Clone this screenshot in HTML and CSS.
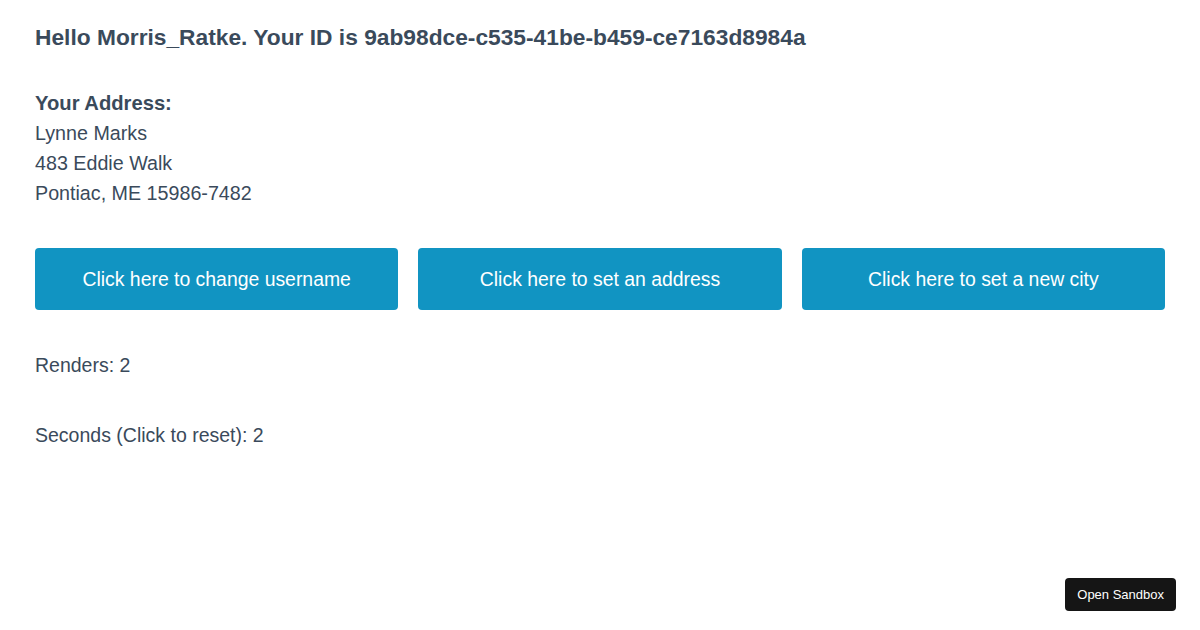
FILE: index.html
```html
<!DOCTYPE html>
<html>
<head>
<meta charset="utf-8">
<link rel="stylesheet" href="styles.css">
</head>
<body>
<main class="app">
  <h1 class="title">Hello Morris_Ratke. Your ID is 9ab98dce-c535-41be-b459-ce7163d8984a</h1>
  <section class="address">
    <div class="label">Your Address:</div>
    <div>Lynne Marks</div>
    <div>483 Eddie Walk</div>
    <div>Pontiac, ME 15986-7482</div>
  </section>
  <div class="actions">
    <button class="btn">Click here to change username</button>
    <button class="btn">Click here to set an address</button>
    <button class="btn">Click here to set a new city</button>
  </div>
  <p class="stat">Renders: 2</p>
  <p class="stat">Seconds (Click to reset): 2</p>
</main>
<button class="sandbox">Open Sandbox</button>
</body>
</html>
```
FILE: styles.css
```css
html, body {
  margin: 0;
  padding: 0;
  background: #ffffff;
}
body {
  font-family: "Liberation Sans", Arial, sans-serif;
  color: #3a4a5b;
}
.app {
  padding: 23px 35px 0 35px;
}
.title {
  margin: 0;
  font-size: 22.75px;
  line-height: 28px;
  font-weight: bold;
}
.address {
  margin-top: 37px;
  font-size: 19.7px;
  line-height: 30px;
}
.label {
  font-weight: bold;
  font-size: 20.2px;
}
.actions {
  margin-top: 40px;
  display: grid;
  grid-template-columns: repeat(3, 1fr);
  gap: 20px;
}
.btn {
  height: 62px;
  border: none;
  border-radius: 4px;
  background: #1194c2;
  color: #ffffff;
  font-family: "Liberation Sans", Arial, sans-serif;
  font-size: 19.4px;
  padding-top: 1px;
  cursor: pointer;
}
.stat {
  margin: 40px 0 0 0;
  font-size: 19.5px;
  line-height: 30px;
}
.stat + .stat {
  margin-top: 40px;
}
.sandbox {
  position: fixed;
  right: 24px;
  bottom: 19px;
  height: 33px;
  padding: 0 12px;
  border: none;
  border-radius: 4px;
  background: #151515;
  color: #ffffff;
  font-family: "Liberation Sans", Arial, sans-serif;
  font-size: 13px;
}
```
